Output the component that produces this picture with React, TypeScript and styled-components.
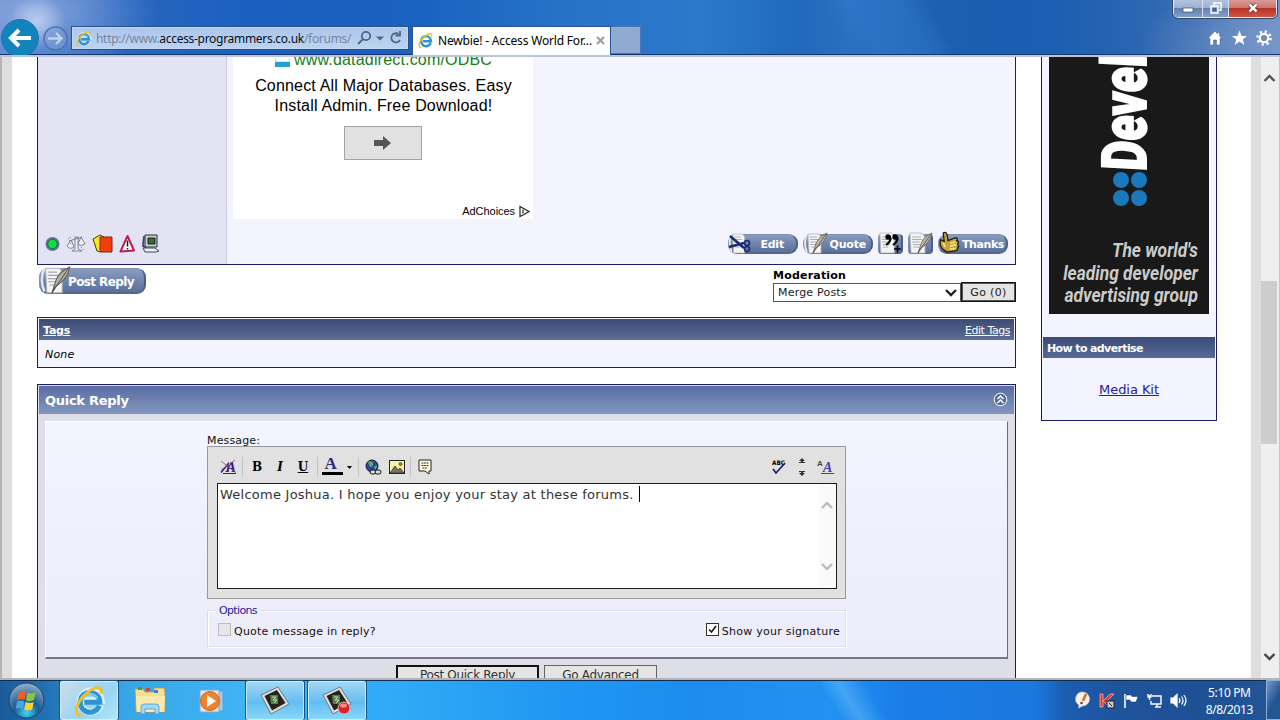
import React from "react";
import styled, { createGlobalStyle } from "styled-components";

const Global = createGlobalStyle`
  * { box-sizing: border-box; }
  body { margin: 0; background: #fff; overflow: hidden; font-family: "DejaVu Sans", Verdana, sans-serif; font-size: 11px; color: #000; }
  svg { display: block; flex: none; overflow: visible; }
`;

const NAVY = "#1b1b66";
const UI_FONT = `"Noto Sans", "Open Sans", sans-serif`;

const Screen = styled.div`
  width: 1280px; height: 720px; overflow: hidden;
  display: grid; grid-template-rows: 57px 621px 42px;
`;

/* Browser frame */
const Chrome = styled.header`
  display: flex; position: relative; overflow: hidden;
  border-bottom: 2px solid #b9c6d9;
  box-shadow: inset 0 -1px 0 #17356b;
  background:
    radial-gradient(ellipse 28px 26px at 37px 22px, rgba(205,222,248,.75), transparent),
    radial-gradient(ellipse 130px 60px at 30px 12px, rgba(160,180,226,.75), transparent),
    radial-gradient(ellipse 130px 60px at 1270px 45px, rgba(120,150,200,.85), transparent),
    linear-gradient(58deg, transparent 65%, rgba(50,125,208,.4) 67%, rgba(50,125,208,.4) 71%, transparent 73%),
    linear-gradient(90deg, #4f80ce 0, #2765be 130px, #1b60c0 250px, #1a62bf 420px, #2672c8 560px, #2b79cb 700px, #2069bb 800px, #2a70c0 850px, #1c5fb0 940px, #1b5eb2 1050px, #2764b1 1120px, #3c6fb4 1200px, #6e93c8 1280px);
`;
const NavButtons = styled.div`display: flex; align-items: center; padding: 19px 0 0 1px; height: 57px; gap: 4px; width: 71px;`;
const AddressBar = styled.div`
  margin-top: 26px; width: 338px; height: 24px; display: flex; align-items: center; padding-left: 4px;
  background: linear-gradient(#abc6ec, #bdd3f0); border: 1px solid #285191; box-shadow: inset 0 0 0 1px #c4d7f2;
`;
const Url = styled.span`
  font: 12px ${UI_FONT}; color: #76879f; margin-left: 5px; width: 261px; white-space: nowrap; letter-spacing: -.3px; padding-top: 1px;
  b { font-weight: 400; color: #08111e; }
`;
const Tab = styled.div`
  margin: 26px 0 0 3px; height: 29px; width: 199px; background: #fff; border: 1px solid #2a5595; border-bottom: 0;
  display: flex; align-items: center; padding: 0 0 1px 5px;
`;
const TabTitle = styled.span`font: 12px ${UI_FONT}; margin-left: 5px; width: 158px; white-space: nowrap; letter-spacing: -.18px;`;
const NewTab = styled.div`margin-top: 26px; height: 28px; width: 30px; background: #8fabd2; border: 1px solid #4b77b4; border-left: 0;`;
const WindowSide = styled.div`margin-left: auto; width: 107px; display: flex; flex-direction: column;`;
const WindowButtons = styled.div`
  width: 104px; height: 18px; display: flex; border: 1px solid #e2ebf7; outline: 1px solid #36486a; border-top: 0; border-radius: 0 0 5px 5px; overflow: hidden;
`;
const WinButton = styled.div<{ $w: number; $close?: boolean }>`
  width: ${p => p.$w}px; display: flex; justify-content: center; align-items: center; border-left: ${p => (p.$w === 28 ? 0 : 1)}px solid #d5dfef;
  padding-bottom: 2px;
  background: ${p => p.$close ? "linear-gradient(#d89c98 0, #cd766e 45%, #b93327 50%, #cf5544)" : "linear-gradient(#b3c3dc 0, #9db2d0 45%, #6484af 50%, #80a0ca)"};
`;
const ToolIcons = styled.div`display: flex; gap: 8px; padding: 12px 0 0 34px;`;

/* Page */
const Viewport = styled.main`display: flex; overflow: hidden; background: #fff;`;
const LeftEdge = styled.div`width: 12px; flex: none; background: #dedede; border-left: 2px solid #b4b4b4;`;
const Content = styled.div`width: 1239px; flex: none; display: flex; gap: 25px; padding-left: 25px; align-items: flex-start;`;
const Gutter = styled.div`width: 10px; flex: none; background: #dedede;`;
const Scrollbar = styled.div`
  width: 19px; flex: none; background: #efefef; display: flex; flex-direction: column; align-items: center; padding: 17px 2px 0 0; border-right: 1px solid #c5c5c5;
`;
const Thumb = styled.div`width: 16px; height: 163px; background: #cdcdcd; margin: 198px 0 208px;`;
const MainCol = styled.div`width: 979px; flex: none;`;

const Post = styled.section`height: 208px; border: 1px solid ${NAVY}; border-top: 0; display: flex; background: #f4f4fe;`;
const PostUser = styled.div`
  width: 189px; background: #e3e3f3; border-right: 1px solid #cfcfe2; display: flex; align-items: flex-end; padding: 0 0 11px 7px; gap: 6px;
`;
const PostBody = styled.div`flex: 1; display: flex; flex-direction: column; justify-content: space-between; padding: 0 7px 10px 6px;`;
const Ad = styled.div`
  width: 300px; height: 162px; background: #fff; display: flex; flex-direction: column; align-items: center;
  font: 16px/20px "Liberation Sans", Arial, sans-serif; white-space: nowrap;
`;
const AdLink = styled.div`height: 19px; color: #168016; display: flex; gap: 3px; overflow: hidden; align-self: flex-start; margin-left: 41px;
  span { display: block; margin-top: -7px; letter-spacing: .18px; } svg { margin-top: -1px; }`;
const AdText = styled.div`text-align: center; letter-spacing: .18px; padding-left: 1px;`;
const AdButton = styled.div`width: 78px; height: 34px; margin-top: 10px; border: 1px solid #a3a3a3; background: #e1e1e1; display: flex; align-items: center; justify-content: center;`;
const AdChoices = styled.div`align-self: flex-end; margin: auto 3px 0 0; padding-bottom: 1px; display: flex; align-items: center; gap: 4px; font-size: 11px; line-height: 13px; letter-spacing: -.05px;`;
const Actions = styled.div`display: flex; justify-content: flex-end; align-items: flex-end; gap: 5px; height: 23px;`;
const Pill = styled.div<{ $w: number; $h?: number; $fs?: number }>`
  position: relative; width: ${p => p.$w}px; height: ${p => p.$h ?? 20}px; border-radius: ${p => (p.$w < 30 ? 4 : 9)}px;
  background: linear-gradient(#8c9cc0, #7187b0 45%, #5b719c); border: 1px solid #8391b2; border-right: 2px solid #4a5e88; border-bottom: 2px solid #53668f;
  display: flex; align-items: center; justify-content: flex-end; color: #fff; font-weight: 700; font-size: ${p => p.$fs ?? 11}px; white-space: nowrap;
  > svg { position: absolute; left: -2px; bottom: -2px; }
`;
const PillLabel = styled.span<{ $r: number; $track: number }>`margin-right: ${p => p.$r}px; letter-spacing: ${p => p.$track}px; padding-top: 2px;`;

const UnderPost = styled.div`display: flex; justify-content: space-between; height: 52px; padding: 3px 0 0 2px;`;
const Moderation = styled.div`width: 243px; height: 34px; display: flex; flex-direction: column; justify-content: flex-end;`;
const ModTitle = styled.b`font-size: 11px; line-height: 13px; letter-spacing: .2px;`;
const ModRow = styled.div`display: flex; align-items: flex-end;`;
const Select = styled.div`
  width: 188px; height: 19px; border: 1px solid #555; display: flex; align-items: center; justify-content: space-between; padding: 0 3px 0 4px; letter-spacing: .2px; color: #222;
`;
const GoButton = styled.div`width: 55px; height: 20px; border: 1px solid #111; box-shadow: inset 0 0 0 1px #555; background: #e4e4e4; display: flex; align-items: center; justify-content: center; letter-spacing: .35px; color: #222;`;

const Panel = styled.section<{ $h: number }>`height: ${p => p.$h}px; border: 1px solid ${NAVY}; padding: 1px; background: #f4f4fe; display: flex; flex-direction: column;`;
const ThinHead = styled.div`
  height: 21px; flex: none; background: linear-gradient(#3c4b74, #566a94 90%, #5f7199); color: #fff; display: flex; justify-content: space-between; align-items: center; padding: 2px 4px 0 4px;
  u { letter-spacing: -.45px; }
  b u { letter-spacing: -.2px; }
`;
const TagsBody = styled.div`flex: 1; padding: 7px 6px 0; font-style: italic; line-height: 15px; letter-spacing: .15px;`;
const ReplyPanel = styled(Panel)`margin-top: 16px; background: #dedee9;`;
const ReplyHead = styled.div`
  height: 28px; flex: none; display: flex; justify-content: space-between; align-items: center; padding: 0 6px; color: #fff; font-weight: 700; font-size: 13px; letter-spacing: -.28px;
  background: linear-gradient(#5a6ca4, #8297c0);
`;
const ReplyInner = styled.div`
  margin: 7px 6px 0; height: 238px; flex: none; border: 1px solid #fff; border-right: 1px solid #6c6c7c; border-bottom: 2px solid #777787;
  background: linear-gradient(#f4f4ff, #ececfa); padding: 12px 160px 0 161px;
`;
const Label = styled.div`height: 12px; line-height: 13px; letter-spacing: .15px; color: #111;`;
const Editor = styled.div`width: 639px; height: 153px; background: #e1e1e1; border: 1px solid #989898; padding: 0 8px 0 9px;`;
const Toolbar = styled.div`height: 36px; display: flex; align-items: center; padding-top: 4px;`;
const Tool = styled.div<{ $ml?: number; $w?: number }>`
  margin-left: ${p => p.$ml ?? 0}px; width: ${p => p.$w ?? 18}px; display: flex; justify-content: center; align-items: center;
  font: 700 12px "DejaVu Serif", serif; line-height: 18px;
`;
const Separator = styled.i<{ $ml: number }>`width: 1px; height: 20px; margin-left: ${p => p.$ml}px; background: #c3c3c7;`;
const TextArea = styled.div`height: 106px; width: 620px; border: 1px solid #1c1c1c; background: #fff; display: flex; justify-content: space-between;`;
const Typed = styled.div`
  font-size: 13px; line-height: 16px; padding: 3px 0 0 2px; color: #333; letter-spacing: .245px; white-space: nowrap; display: flex;
`;
const Caret = styled.i`width: 1px; height: 16px; margin-left: 5px; background: #000; margin-top: -1px;`;
const InnerScroll = styled.div`width: 17px; display: flex; flex-direction: column; justify-content: space-between; align-items: center; padding: 17px 1px 17px 0; background: #fafafa;`;
const Options = styled.div`
  position: relative; width: 639px; height: 37px; margin-top: 11px; border: 1px solid #dedeea; box-shadow: inset 1px 1px 0 #fff, 1px 1px 0 #fff;
  display: flex; justify-content: space-between; padding: 12px 5px 0 10px;
`;
const Legend = styled.span`position: absolute; left: 8px; top: -7px; padding: 0 3px; line-height: 14px; background: #eeeefb; color: #22229c; letter-spacing: -.65px;`;
const CheckLine = styled.div<{ $track: number }>`display: flex; gap: 3px; height: 16px; line-height: 17px; white-space: nowrap; letter-spacing: ${p => p.$track}px; color: #111;`;
const Checkbox = styled.i<{ $off?: boolean }>`width: 13px; height: 13px; border: 1px solid ${p => (p.$off ? "#bdbdbd" : "#333")}; background: ${p => (p.$off ? "#e6e6ea" : "#fff")};`;
const Submit = styled.div`display: flex; gap: 5px; justify-content: center; margin-top: 6px;`;
const SubmitButton = styled.div<{ $w: number; $main?: boolean }>`
  width: ${p => p.$w}px; height: 20px; border: ${p => (p.$main ? "2px solid #111" : "1px solid #666")}; background: #e5e5e5; color: #333;
  font-size: 12px; line-height: ${p => (p.$main ? 17 : 19)}px; text-align: center; white-space: nowrap; letter-spacing: -.3px;
`;

/* Sidebar */
const Side = styled.aside`width: 176px; height: 364px; border: 1px solid ${NAVY}; border-top: 0; background: #f4f4fe; display: flex; flex-direction: column; padding: 0 1px;`;
const Banner = styled.div`width: 160px; height: 257px; margin: 0 6px; background: #191919; display: flex; flex-direction: column; align-items: flex-end; overflow: hidden;`;
const BannerText = styled.div`
  font: italic 700 20px/22.5px Roboto, sans-serif; color: #cbcbcb; text-align: right; white-space: nowrap; margin: 27px 11px 0 0;
  transform: scaleX(.87); transform-origin: right;
`;
const SideHead = styled.div`margin-top: 23px; height: 21px; background: linear-gradient(#3c4b78, #566a94); color: #fff; font-weight: 700; line-height: 23px; padding-left: 4px; letter-spacing: -.62px;`;
const MediaKit = styled.u`text-align: center; margin-top: 23px; font-size: 13px; line-height: 17px; color: #22229c; letter-spacing: -.05px;`;

/* Taskbar */
const Taskbar = styled.footer`
  border-top: 2px solid #b3b5b8; box-shadow: inset 0 1px 0 #0f2d52; display: flex; align-items: stretch; overflow: hidden;
  background:
    linear-gradient(58deg, transparent 64.5%, rgba(150,220,255,.3) 66%, transparent 68%),
    linear-gradient(90deg, #1a5a99 0, #2271b4 45px, #38a5e6 125px, #3fb4f4 240px, #2eaaf6 400px, #2097f2 560px, #1c8cee 700px, #2291f2 830px, #1a7ee8 900px, #1a78de 1035px, #1b5db0 1065px, #1f539b 1120px, #1e5096 1200px, #245595 1280px);
`;
const Start = styled.div`width: 59px; padding: 0 0 0 8px; display: flex; align-items: center;`;
const Task = styled.div<{ $active?: boolean; $w: number; $bright?: boolean }>`
  width: ${p => p.$w}px; margin-right: 2px; display: flex; align-items: center; justify-content: center; padding-top: 1px;
  ${p => p.$active ? `border: 1px solid #17527f; border-bottom: 0; border-radius: 3px; box-shadow: inset 0 0 0 1px rgba(220,245,255,.8);
  background: ${p.$bright ? "linear-gradient(135deg, #cdddea, #98d4f4 60%, #b2e6fb)" : "linear-gradient(#a6d7f2, #62bef2 55%, #8cd8fb)"};` : ""}
`;
const Tray = styled.div`margin-left: auto; display: flex; align-items: center; gap: 7px; margin-right: 13px;`;
const Clock = styled.div`font: 12px/17px ${UI_FONT}; color: #fff; text-align: center; letter-spacing: -.35px; white-space: nowrap; margin-left: 12px; padding-top: 2px;`;
const ShowDesktop = styled.div`width: 14px; border: 1px solid #8fb0d6; border-right: 0; background: linear-gradient(120deg, #7798c5, #245595 55%);`;

const IEIcon = ({ s }: { s: number }) => (
  <svg width={s} height={s} viewBox="0 0 32 32">
    <path d="M28.5 20 A11.3 11.3 0 1 1 29 15.5 L11 15.5" fill="none" stroke="#fff" strokeOpacity=".6" strokeWidth="7.5" />
    <path d="M27 21 A10.5 10.5 0 1 1 27.6 17.4 L11 17.4" fill="none" stroke="#2c94ce" strokeWidth="5.4" />
    <path d="M8 15 A9.5 9.5 0 0 1 25 13" fill="none" stroke="#79cdf0" strokeWidth="2.2" />
    <path d="M6 31 C-2 29 5 14 14 7 C22 1 31 -1 29 7" fill="none" stroke="#efc21e" strokeWidth="3" strokeLinecap="round" />
  </svg>
);
const Chevron = ({ up, c, w = 12 }: { up?: boolean; c: string; w?: number }) => (
  <svg width={w} height="9" viewBox="0 0 12 9"><path d={up ? "M1 7 L6 2 L11 7" : "M1 2 L6 7 L11 2"} fill="none" stroke={c} strokeWidth="2.4" /></svg>
);
const Paper = ({ quill = true, w = 26, h = 21, back = true }: { quill?: boolean; w?: number; h?: number; back?: boolean }) => (
  <svg width={w} height={h} viewBox="0 0 26 21" preserveAspectRatio="none">
    {back && <path d="M5 1 Q1 10 5 19" fill="none" stroke="#e4e7ef" strokeWidth="2" />}
    <path d={back ? "M6 1 H17 L19 4 V20 H7 Z" : "M3 0 H15 L18 4 V20 H4 Z"} fill="#f4f4f2" stroke="#b3b6bf" strokeWidth=".8" />
    <path d={back ? "M8 4h7M8 6.5h8M8 9h6M8 11.5h7M9 14h5" : "M5 4h9M5 6.500h10M5 9h8M6 11.500h7M6 14h6"} stroke="#a2a5ad" strokeWidth=".9" />
    {quill && <><path d="M13 14 Q15 4 25 0 Q24 9 14 15 L11 20 Z" fill="#b9b2a6" stroke="#5e5a58" strokeWidth=".8" /><path d="M24 1 L11 20" stroke="#544f4e" strokeWidth=".8" /></>}
  </svg>
);
const CamTask = ({ rec }: { rec?: boolean }) => (
  <svg width="34" height="30" viewBox="0 0 34 30">
    <path d="M3 9 L20 1 L31 18 L13 28 Z" fill="#dededc" stroke="#75797b" />
    <path d="M6.500 10 L19 4 L27.500 17 L14 24.500 Z" fill="#22251f" />
    <path d="M12 9 H20 V18 H13 Z" fill="#57804a" /><path d="M14 11h4l-3 3h4l-3 3" stroke="#c3dfae" fill="none" />
    {rec && <><circle cx="24" cy="22" r="6" fill="#d8232c" stroke="#efc8c8" strokeWidth=".8" /><ellipse cx="23.500" cy="19.500" rx="3.500" ry="2" fill="#f58b85" /></>}
  </svg>
);

export default function App() {
  return (
    <>
      <Global />
      <Screen>
        <Chrome>
          <NavButtons>
            <svg width="38" height="38" viewBox="0 0 38 38">
              <circle cx="19" cy="19" r="18.500" fill="#1284bd" stroke="#2d6ea5" />
              <path d="M30 19 H11 M18 11 L10 19 L18 27" fill="none" stroke="#fff" strokeWidth="4" />
            </svg>
            <svg width="25" height="25" viewBox="0 0 25 25">
              <circle cx="12.500" cy="12.500" r="11.500" fill="#7f9fd3" fillOpacity=".55" stroke="#4c73b3" strokeWidth="1.500" />
              <path d="M5 12.500 H18 M13 7 L18.500 12.500 L13 18" fill="none" stroke="#bfd1ee" strokeWidth="2.400" />
            </svg>
          </NavButtons>
          <AddressBar>
            <IEIcon s={15} />
            <Url>http://www.<b>access-programmers.co.uk</b>/forums/</Url>
            <svg width="46" height="16" viewBox="0 0 46 16" fill="none" stroke="#4f6482" strokeWidth="1.800">
              <circle cx="9" cy="6" r="4.200" /><path d="M6 9 L1 14" />
              <path d="M19 6.500 H27 L23 10.500 Z" fill="#4f6482" stroke="none" />
              <path d="M43 10 A4.600 4.600 0 1 1 41.500 4" /><path d="M38.500 5.500 H43 V1" />
            </svg>
          </AddressBar>
          <Tab>
            <IEIcon s={15} />
            <TabTitle>Newbie! - Access World For...</TabTitle>
            <svg width="9" height="9" viewBox="0 0 9 9"><path d="M1 1 L8 8 M8 1 L1 8" stroke="#9b9b9b" strokeWidth="2" /></svg>
          </Tab>
          <NewTab />
          <WindowSide>
            <WindowButtons>
              <WinButton $w={28}><svg width="12" height="6"><rect x="1" y="3" width="10" height="4" fill="#fff" stroke="#46597a" strokeWidth=".8" /></svg></WinButton>
              <WinButton $w={27}>
                <svg width="12" height="12" viewBox="0 0 12 12" fill="none" stroke="#fff" strokeWidth="1.500"><path d="M4 3V1h7v7H9" /><rect x="1" y="4" width="7" height="7" /><rect x="3.500" y="6.500" width="2" height="2" stroke="#41597f" strokeWidth="1" /></svg>
              </WinButton>
              <WinButton $w={48} $close><svg width="10" height="10" viewBox="0 0 10 10"><path d="M1.500 1.500 L8.500 8.500 M8.500 1.500 L1.500 8.500" stroke="#5d2a2c" strokeWidth="4" /><path d="M1.500 1.500 L8.500 8.500 M8.500 1.500 L1.500 8.500" stroke="#fff" strokeWidth="2.500" /></svg></WinButton>
            </WindowButtons>
            <ToolIcons>
              <svg width="16" height="16" viewBox="0 0 16 16"><path d="M8 1 L1 8.500 H3 V15 H6.500 V10 H9.500 V15 H13 V8.500 H15 L12.500 6 V2.500 H10.500 V4 Z" fill="#fff" stroke="#3e5f92" strokeWidth=".5" /></svg>
              <svg width="17" height="16" viewBox="0 0 17 16"><path d="M8.500 0.500 L10.500 6 H16 L11.700 9.400 L13.500 15 L8.500 11.600 L3.500 15 L5.300 9.400 L1 6 H6.500 Z" fill="#fff" /></svg>
              <svg width="16" height="16" viewBox="0 0 16 16"><circle cx="8" cy="8" r="6.500" fill="none" stroke="#fff" strokeWidth="2.500" strokeDasharray="2.200 2.900" /><circle cx="8" cy="8" r="4.200" fill="#6f8bb5" stroke="#fff" strokeWidth="2.200" /></svg>
            </ToolIcons>
          </WindowSide>
        </Chrome>

        <Viewport>
          <LeftEdge />
          <Content>
            <MainCol>
              <Post>
                <PostUser>
                  <svg width="15" height="19" viewBox="0 0 15 19"><circle cx="7.500" cy="10" r="7" fill="#66739e" /><circle cx="7.500" cy="10" r="4.800" fill="#14db45" stroke="#136a36" /></svg>
                  <svg width="20" height="19" viewBox="0 0 20 19" fill="#f3f3f8" stroke="#6d7794" strokeWidth=".9">
                    <path d="M9 3h3v12l4 2H6l3-2z" /><path d="M1 12q3 4 7 1l-3-7zM12 10q3 3 7 0l-4-7zM3 7l13-4" /><path d="M2 5l3-2M15 13l3 3M4 9l2 2" strokeDasharray="1.500 1" />
                  </svg>
                  <svg width="21" height="19" viewBox="0 0 21 19"><path d="M1 5 L8 1 L12 3 L9 18 L5 17 Z" fill="#ffe51c" stroke="#47370a" /><path d="M8 3 H20 V18 H9 Q7 15 8 13 Z" fill="#f13e0a" stroke="#7a2810" /></svg>
                  <svg width="16" height="19" viewBox="0 0 16 19"><path d="M8.500 2 L15 16.500 L1.500 17.500 Z" fill="#fff" stroke="#b91f52" strokeWidth="2" strokeLinejoin="round" /><path d="M8.500 6.500v6M8.500 14v1.500" stroke="#2b1525" strokeWidth="1.500" /></svg>
                  <svg width="19" height="19" viewBox="0 0 19 19"><path d="M4 1 H16 V13 H4Z" fill="#cdcfdb" stroke="#23283b" /><path d="M7 4h7v6H7z" fill="#3c6c38" stroke="#17211b" /><path d="M3 2 L2 12 L5 14" fill="none" stroke="#49506b" strokeWidth="2" /><path d="M2 14 H14 L18 17 L15 18 H4 Z" fill="#eceef4" stroke="#434a62" /></svg>
                </PostUser>
                <PostBody>
                  <Ad>
                    <AdLink>
                      <svg width="17" height="12" viewBox="0 0 17 12"><path d="M1 1v7h15V1l-2 4H4z" fill="#c9ebf6" /><path d="M1 6h15v5H1z" fill="#25a3cf" /><path d="M5 1h8v4H5z" fill="#fff" /></svg>
                      <span>www.datadirect.com/ODBC</span>
                    </AdLink>
                    <AdText>Connect All Major Databases. Easy<br />Install Admin. Free Download!</AdText>
                    <AdButton><svg width="20" height="16" viewBox="0 0 20 16"><path d="M1 5h9V1l8 7-8 7v-4H1z" fill="#555" /></svg></AdButton>
                    <AdChoices>AdChoices<svg width="11" height="11" viewBox="0 0 11 11"><path d="M5 8.500 L1 10.500 V0.500 L10 5.500 L5 8.500 M4 3.500v4" fill="none" stroke="#222" strokeWidth="1.200" /></svg></AdChoices>
                  </Ad>
                  <Actions>
                    <Pill $w={70}>
                      <Paper quill={false} w={24} />
                      <svg width="26" height="18" viewBox="0 0 26 18"><path d="M3 0 L17 12 M2 11 L17 7" stroke="#1a2d70" strokeWidth="2.600" /><circle cx="20" cy="7" r="2.500" fill="none" stroke="#1a2d70" strokeWidth="1.600" /><circle cx="20" cy="13" r="2.500" fill="none" stroke="#1a2d70" strokeWidth="1.600" /></svg>
                      <PillLabel $r={12} $track={-.2}>Edit</PillLabel>
                    </Pill>
                    <Pill $w={70}><Paper /><PillLabel $r={5} $track={-.2}>Quote</PillLabel></Pill>
                    <Pill $w={25}>
                      <Paper quill={false} back={false} w={25} />
                      <svg width="26" height="22" viewBox="0 0 26 22"><circle cx="11" cy="5" r="2.700" /><path d="M13 4 q2 5 -4 9" fill="none" stroke="#000" strokeWidth="2" /><circle cx="18" cy="5" r="2.700" /><path d="M20 4 q2 5 -4 9" fill="none" stroke="#000" strokeWidth="2" /><path d="M17 17h7M20.500 13.500v7" stroke="#000" strokeWidth="1.600" /></svg>
                    </Pill>
                    <Pill $w={25}><Paper w={26} back={false} /></Pill>
                    <Pill $w={70}>
                      <svg width="24" height="23" viewBox="0 0 24 24"><path d="M6 2 q3 -2 4 2 l1 6 8 -3 q3 1 1 3 3 1 1 4 2 2 0 4 0 3 -4 3 L10 22 Q1 18 3 9 L7 11 Z" fill="#c9a23a" stroke="#1d1708" strokeWidth="1.300" /><path d="M13 13l6-2M13 16l7-2M13 19l6-1M6 12l2 5" stroke="#f3e28a" strokeWidth="1.800" /></svg>
                      <PillLabel $r={2} $track={-.4}>Thanks</PillLabel>
                    </Pill>
                  </Actions>
                </PostBody>
              </Post>

              <UnderPost>
                <Pill $w={107} $h={26} $fs={12}><Paper w={33} h={27} /><PillLabel $r={10} $track={-.6}>Post Reply</PillLabel></Pill>
                <Moderation>
                  <ModTitle>Moderation</ModTitle>
                  <ModRow><Select>Merge Posts<Chevron c="#222" /></Select><GoButton>Go (0)</GoButton></ModRow>
                </Moderation>
              </UnderPost>

              <Panel $h={51}>
                <ThinHead><b><u>Tags</u></b><u>Edit Tags</u></ThinHead>
                <TagsBody>None</TagsBody>
              </Panel>

              <ReplyPanel $h={320}>
                <ReplyHead>
                  Quick Reply
                  <svg width="15" height="15" viewBox="0 0 15 15" fill="none" stroke="#fff"><circle cx="7.500" cy="6.500" r="6.300" fill="#596b98" /><path d="M4.500 6 L7.500 3 L10.500 6 M4.500 10 L7.500 7 L10.500 10" strokeWidth="1.500" /></svg>
                </ReplyHead>
                <ReplyInner>
                  <Label>Message:</Label>
                  <Editor>
                    <Toolbar>
                      <Tool $ml={2}>
                        <svg width="17" height="16" viewBox="0 0 17 16" fill="none"><path d="M1 13.500 L8 5 V13" stroke="#2c208e" strokeWidth="1.600" /><text x="6" y="13" fontSize="15" fill="#2c208e" fontFamily="Liberation Serif" fontWeight="700" fontStyle="italic">A</text><path d="M3 14.500h13" stroke="#2c208e" /><path d="M1 2 L16 14 M15 1 L1 11" stroke="#b84260" strokeWidth=".8" /></svg>
                      </Tool>
                      <Separator $ml={5} />
                      <Tool $ml={5}>B</Tool>
                      <Tool $ml={5}><i>I</i></Tool>
                      <Tool $ml={5}><u>U</u></Tool>
                      <Separator $ml={5} />
                      <Tool $ml={4} $w={22}>
                        <svg width="22" height="20" viewBox="0 0 22 20"><text x="2.500" y="12" fontFamily="Liberation Serif" fontWeight="700" fontSize="17" fill="#292b78">A</text><path d="M0 15h21v3H0z" /></svg>
                      </Tool>
                      <Tool $ml={3} $w={6}><svg width="6" height="3"><path d="M0 0h5l-2.500 3z" /></svg></Tool>
                      <Separator $ml={5} />
                      <Tool $ml={5}>
                        <svg width="17" height="17" viewBox="0 0 17 17"><circle cx="7" cy="7" r="6" fill="#264895" stroke="#141f49" /><path d="M3 3q4-2 5 1t-3 4zM9 8q3-3 3 0l-2 3z" fill="#64a66b" /><rect x="5" y="11" width="6" height="4" rx="2" fill="#ddd" stroke="#111" /><rect x="10" y="11" width="6" height="4" rx="2" fill="#ddd" stroke="#111" /></svg>
                      </Tool>
                      <Tool $ml={6}>
                        <svg width="16" height="14" viewBox="0 0 16 14"><rect x=".5" y=".5" width="15" height="13" fill="#f5f0a2" stroke="#222" /><path d="M1 13 L6 6 L9 10 L11 8 L15 13Z" fill="#77745a" stroke="#333" strokeWidth=".8" /><circle cx="11.500" cy="4" r="1.500" fill="#a88d27" stroke="#333" strokeWidth=".7" /></svg>
                      </Tool>
                      <Separator $ml={4} />
                      <Tool $ml={5}>
                        <svg width="14" height="16" viewBox="0 0 14 16"><path d="M1 1h12v11h-2v3l-4-3H1z" fill="#fbfae0" stroke="#222" /><path d="M3.500 4h7M3.500 6.500h7M4.500 9h5" stroke="#333" strokeDasharray="2 .6" /></svg>
                      </Tool>
                      <Tool $ml={336}>
                        <svg width="16" height="16" viewBox="0 0 16 16"><text x="1" y="6" fontFamily="DejaVu Sans" fontWeight="700" fontSize="6.200" textLength="13" lengthAdjust="spacingAndGlyphs">ABC</text><path d="M2 10 L5 14 L14 4" fill="none" stroke="#1c1a63" strokeWidth="1.700" /></svg>
                      </Tool>
                      <Tool $ml={5}>
                        <svg width="8" height="20" viewBox="0 0 8 20"><path d="M4 1l3 3H5v1h2v1H1V5h2V4H1zM4 19l3-3H5v-1h2v-1H1v1h2v1H1z" fill="#333" /></svg>
                      </Tool>
                      <Tool $ml={5}>
                        <svg width="17" height="16" viewBox="0 0 17 16" fill="none"><text x="0" y="7" fontFamily="Liberation Sans" fontSize="8" fill="#444">A</text><text x="6" y="13" fontFamily="Liberation Serif" fontSize="14" fontWeight="700" fontStyle="italic" fill="#4a3fa0">A</text><path d="M4 14.500h13" stroke="#4a3fa0" /></svg>
                      </Tool>
                    </Toolbar>
                    <TextArea>
                      <Typed>Welcome Joshua. I hope you enjoy your stay at these forums.<Caret /></Typed>
                      <InnerScroll><Chevron up c="#bcbcbc" /><Chevron c="#bcbcbc" /></InnerScroll>
                    </TextArea>
                  </Editor>
                  <Options>
                    <Legend>Options</Legend>
                    <CheckLine $track={.22}><Checkbox $off />Quote message in reply?</CheckLine>
                    <CheckLine $track={.27}>
                      <Checkbox><svg width="11" height="11" viewBox="0 0 11 11"><path d="M2 5.500 L4.500 8 L9 2" fill="none" stroke="#222" strokeWidth="1.700" /></svg></Checkbox>
                      Show your signature
                    </CheckLine>
                  </Options>
                </ReplyInner>
                <Submit><SubmitButton $w={143} $main>Post Quick Reply</SubmitButton><SubmitButton $w={113}>Go Advanced</SubmitButton></Submit>
              </ReplyPanel>
            </MainCol>

            <Side>
              <Banner>
                <svg width="160" height="155" viewBox="0 0 160 155">
                  <text transform="translate(97 114.5) rotate(-90) skewX(-3) scale(.745 1)" fontFamily="Roboto" fontWeight="900" fontSize="62" fill="#fff" stroke="#fff" strokeWidth="2">Devel</text>
                  <g fill="#1a78bd"><circle cx="72" cy="123" r="8" /><circle cx="90" cy="123" r="8" /><circle cx="72" cy="141" r="8" /><circle cx="90" cy="141" r="8" /></g>
                </svg>
                <BannerText>The world's<br />leading developer<br />advertising group</BannerText>
              </Banner>
              <SideHead>How to advertise</SideHead>
              <MediaKit>Media Kit</MediaKit>
            </Side>
          </Content>
          <Gutter />
          <Scrollbar><Chevron up c="#555" w={13} /><Thumb /><Chevron c="#444" w={13} /></Scrollbar>
        </Viewport>

        <Taskbar>
          <Start>
            <svg width="37" height="37" viewBox="0 0 37 37">
              <defs><radialGradient id="orb" cx=".5" cy=".85" r=".8"><stop offset="0" stopColor="#44d5f5" /><stop offset=".45" stopColor="#185b91" /><stop offset="1" stopColor="#8ba9c2" /></radialGradient></defs>
              <circle cx="18.500" cy="18.500" r="17.500" fill="url(#orb)" stroke="#1c4368" />
              <path d="M11 10 q4-2.500 7 0 l-1.500 8 q-4-2-7.500 0z" fill="#e9602a" /><path d="M19.500 10.500 q4 2 8 0 l-1.500 7.500 q-4 2-8 .5z" fill="#8cc63f" />
              <path d="M9 19.500 q4-2 7.300 0 l-1.500 7.500 q-4-2-7.300 0z" fill="#4aa5e5" /><path d="M17.700 20 q4 2 8 0 l-1.500 7.500 q-4 2-8 0z" fill="#fbd22e" />
            </svg>
          </Start>
          <Task $w={60} $active $bright><IEIcon s={30} /></Task>
          <Task $w={58}>
            <svg width="32" height="29" viewBox="0 0 32 29"><path d="M1 3h8l2 3h9V2h10l1 4v20H2z" fill="#f6df93" stroke="#b99745" strokeWidth=".8" /><path d="M4 1h4v3H4z" fill="#3aa04a" /><path d="M12 2h4v3h-4z" fill="#cf433b" /><path d="M20 4h4v3h-4z" fill="#3880cd" /><path d="M2 10h29l-1 16H3z" fill="#fae9ac" /><path d="M7 28v-7q0-3 3-3h12q3 0 3 3v7h-4v-5H11v5z" fill="#a0d9f1" stroke="#4aa0ce" strokeWidth=".8" /></svg>
          </Task>
          <Task $w={62}>
            <svg width="26" height="26" viewBox="0 0 26 26"><path d="M8 3h16v20H8z" fill="#a3cde9" stroke="#5b9ecb" /><path d="M1 2h19v22H1z" fill="#dce8f2" stroke="#7fa7c8" /><circle cx="11" cy="13" r="9.500" fill="#f0822c" stroke="#d46818" /><path d="M8 7v12l9-6z" fill="#fff" /></svg>
          </Task>
          <Task $w={60} $active><CamTask /></Task>
          <Task $w={60} $active><CamTask rec /></Task>
          <Tray>
            <svg width="17" height="18" viewBox="0 0 17 18"><path d="M8.500 1a7 7 0 0 1 0 14l-4 2 .5-3A7 7 0 0 1 8.500 1z" fill="#f7f4ec" stroke="#bcc3cc" strokeWidth=".7" /><path d="M12 3L9 10" stroke="#cf7425" strokeWidth="2.600" /><circle cx="7.500" cy="12" r="1.300" fill="#83391d" /></svg>
            <svg width="17" height="17" viewBox="0 0 17 17"><path d="M2 2h3v13H2zM5 9l7-7h4L9 9l6 6h-4z" fill="#e33b35" stroke="#f5d6d2" strokeWidth=".6" /><rect x="9" y="9" width="7" height="7" fill="#ccc" stroke="#222" /><path d="M11 11l3 3" stroke="#222" /></svg>
            <svg width="17" height="17" viewBox="0 0 17 17"><path d="M3 2v14" stroke="#fff" strokeWidth="1.600" /><path d="M4 3h5l1 1.500h6L14 10H9L8 8H4z" fill="#fff" stroke="#1b3562" strokeWidth=".5" /></svg>
            <svg width="17" height="17" viewBox="0 0 17 17" fill="none" stroke="#fff" strokeWidth="1.400"><path d="M6 4h9v8H5V9M9 15h6M11 12v3" /><path d="M2 2v2h3V2M1.500 5h4M3.500 5v3" /></svg>
            <svg width="17" height="17" viewBox="0 0 17 17" fill="none" stroke="#fff" strokeWidth="1.200"><path d="M1 6h2.500L7 2.500v12L3.500 11H1z" fill="#fff" /><path d="M9 6q2 2.500 0 5M11.500 4.500q3 4 0 8M13.800 3q4.400 5.500 0 11" /></svg>
            <Clock>5:10 PM<br />8/8/2013</Clock>
          </Tray>
          <ShowDesktop />
        </Taskbar>
      </Screen>
    </>
  );
}
